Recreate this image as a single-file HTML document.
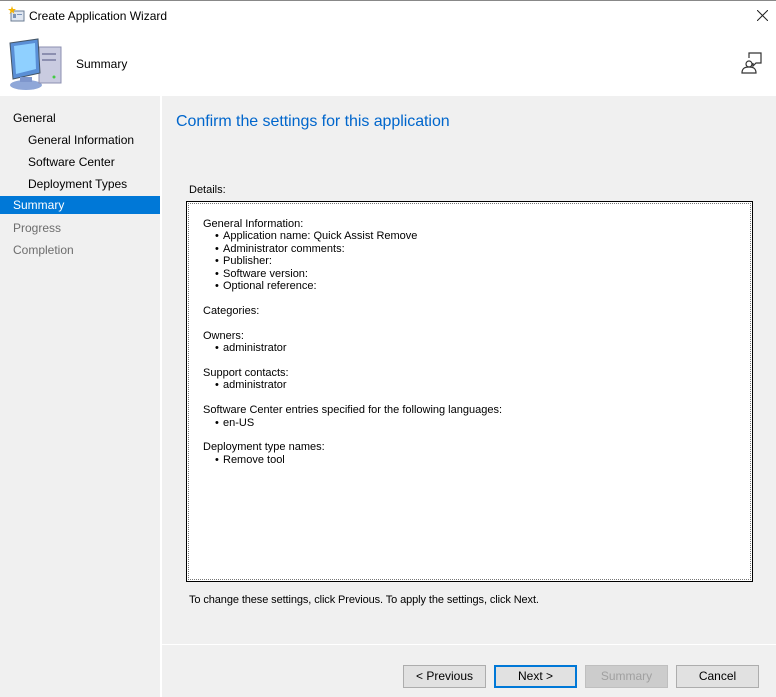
<!DOCTYPE html>
<html><head><style>
*{margin:0;padding:0;box-sizing:border-box}
body{width:776px;height:697px;background:#f0f0f0;font-family:"Liberation Sans",sans-serif;font-size:12px;color:#000;position:relative;overflow:hidden}
.abs{position:absolute}
#top{left:0;top:0;width:776px;height:96px;background:#fff;border-top:1px solid #888}
.nav{position:absolute;left:0;width:160px;height:19px;line-height:19px;font-size:12px}
.btn{position:absolute;top:665px;width:83px;height:23px;background:#e1e1e1;border:1px solid #adadad;text-align:center;line-height:21px;font-size:12px}
#box{left:186px;top:201px;width:567px;height:381px;background:#fff;border:1px solid #000}
#inner{position:absolute;left:1px;top:1px;right:1px;bottom:1px;border:1px dotted #777}
#txt{position:absolute;left:14px;top:14px;font-size:11px;line-height:12.4px}
#txt ul{list-style:none;margin-left:12px}
#txt li:before{content:"•";display:inline-block;width:8px;margin-left:-8px}
#txt li{padding-left:8px}
</style></head><body>
<div id="top" class="abs"></div>
<svg class="abs" style="left:8px;top:6px" width="18" height="18" viewBox="0 0 18 18"><rect x="3" y="5" width="13" height="10" fill="#dfe6f0" stroke="#6b7c93"/><rect x="5" y="8" width="3" height="4" fill="#7a93b8"/><rect x="9" y="8" width="5" height="1" fill="#7a93b8"/><path d="M4 0L5 3 8 3 5.5 5 6.5 8 4 6 1.5 8 2.5 5 0 3 3 3Z" fill="#f5b400"/></svg>
<div class="abs" style="left:29px;top:9px;font-size:12px">Create Application Wizard</div>
<svg class="abs" style="left:757px;top:10px" width="11" height="11" viewBox="0 0 11 11" stroke="#222" stroke-width="1"><path d="M0 0L11 11M11 0L0 11"/></svg>
<svg class="abs" style="left:6px;top:37px" width="58" height="55" viewBox="0 0 58 55"><ellipse cx="20" cy="48" rx="16" ry="5" fill="#8fa7d8"/><rect x="33" y="10" width="22" height="36" fill="#c9cbe0" stroke="#8c8fb0"/><rect x="36" y="16" width="14" height="2" fill="#8c8fb0"/><rect x="36" y="22" width="14" height="2" fill="#8c8fb0"/><circle cx="48" cy="40" r="1.5" fill="#4c4"/><path d="M4 6L32 2 34 36 7 42Z" fill="#5a8fd6" stroke="#456"/><path d="M8 9L29 6 30 32 10 37Z" fill="#8fd0ff"/><rect x="14" y="40" width="12" height="5" fill="#7e96cc"/></svg>
<div class="abs" style="left:76px;top:57px;font-size:12px">Summary</div>
<svg class="abs" style="left:740px;top:52px" width="24" height="22" viewBox="0 0 24 22" fill="none" stroke="#333" stroke-width="1.2"><path d="M9 6V1H21V11H16L13 14V11"/><circle cx="9" cy="12" r="3"/><path d="M2 21C2 16 5 15 9 15S16 16 16 21Z"/></svg>
<div class="abs" style="left:160px;top:96px;width:2px;height:601px;background:#fff"></div>
<div class="nav" style="top:109px;padding-left:13px">General</div>
<div class="nav" style="top:131px;padding-left:28px">General Information</div>
<div class="nav" style="top:153px;padding-left:28px">Software Center</div>
<div class="nav" style="top:175px;padding-left:28px">Deployment Types</div>
<div class="nav" style="top:196px;padding-left:13px;background:#0078d7;color:#fff;height:18px;line-height:19px">Summary</div>
<div class="nav" style="top:219px;padding-left:13px;color:#6d6d6d">Progress</div>
<div class="nav" style="top:241px;padding-left:13px;color:#6d6d6d">Completion</div>
<div class="abs" style="left:176px;top:113px;font-size:16px;color:#0066cc;letter-spacing:-0.05px">Confirm the settings for this application</div>
<div class="abs" style="left:189px;top:184px;font-size:11px">Details:</div>
<div id="box" class="abs"><div id="inner"><div id="txt">
General Information:
<ul><li>Application name: Quick Assist Remove</li><li>Administrator comments:</li><li>Publisher:</li><li>Software version:</li><li>Optional reference:</li></ul>
<br>Categories:<br><br>
Owners:<ul><li>administrator</li></ul><br>
Support contacts:<ul><li>administrator</li></ul><br>
Software Center entries specified for the following languages:<ul><li>en-US</li></ul><br>
Deployment type names:<ul><li>Remove tool</li></ul>
</div></div></div>
<div class="abs" style="left:189px;top:594px;font-size:11px;letter-spacing:-0.1px">To change these settings, click Previous. To apply the settings, click Next.</div>
<div class="abs" style="left:162px;top:644px;width:614px;height:1px;background:#fff"></div>
<div class="btn" style="left:403px">&lt; Previous</div>
<div class="btn" style="left:494px;border:2px solid #0078d7;line-height:19px">Next &gt;</div>
<div class="btn" style="left:585px;background:#ccc;border-color:#bfbfbf;color:#a0a0a0">Summary</div>
<div class="btn" style="left:676px">Cancel</div>
</body></html>
